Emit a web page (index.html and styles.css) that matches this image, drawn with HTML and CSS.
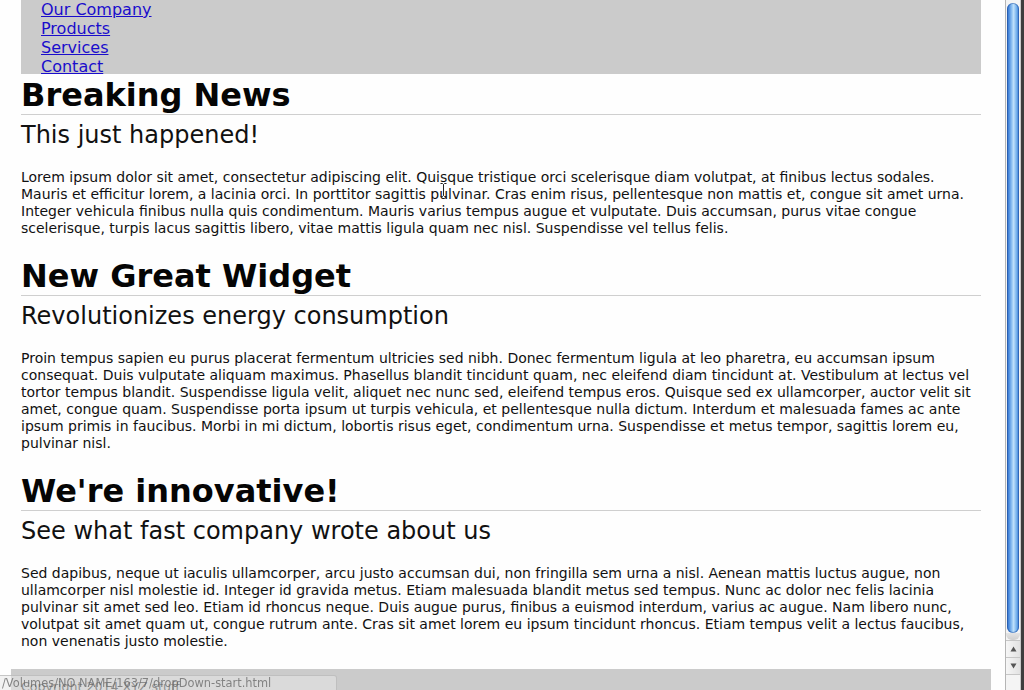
FILE: index.html
```html
<!DOCTYPE html>
<html lang="en">
<head>
<meta charset="utf-8">
<title>dropDown-start</title>
<link rel="stylesheet" href="styles.css">
</head>
<body>
<div class="page">
  <header class="site-header">
    <ul class="nav">
      <li><a href="#">Our Company</a></li>
      <li><a href="#">Products</a></li>
      <li><a href="#">Services</a></li>
      <li><a href="#">Contact</a></li>
    </ul>
  </header>

  <section class="story">
    <h1>Breaking News</h1>
    <h2>This just happened!</h2>
    <p>Lorem ipsum dolor sit amet, consectetur adipiscing elit. Quisque tristique orci scelerisque diam volutpat, at finibus lectus sodales. Mauris et efficitur lorem, a lacinia orci. In porttitor sagittis pulvinar. Cras enim risus, pellentesque non mattis et, congue sit amet urna. Integer vehicula finibus nulla quis condimentum. Mauris varius tempus augue et vulputate. Duis accumsan, purus vitae congue scelerisque, turpis lacus sagittis libero, vitae mattis ligula quam nec nisl. Suspendisse vel tellus felis.</p>
  </section>

  <section class="story">
    <h1>New Great Widget</h1>
    <h2>Revolutionizes energy consumption</h2>
    <p>Proin tempus sapien eu purus placerat fermentum ultricies sed nibh. Donec fermentum ligula at leo pharetra, eu accumsan ipsum consequat. Duis vulputate aliquam maximus. Phasellus blandit tincidunt quam, nec eleifend diam tincidunt at. Vestibulum at lectus vel tortor tempus blandit. Suspendisse ligula velit, aliquet nec nunc sed, eleifend tempus eros. Quisque sed ex ullamcorper, auctor velit sit amet, congue quam. Suspendisse porta ipsum ut turpis vehicula, et pellentesque nulla dictum. Interdum et malesuada fames ac ante ipsum primis in faucibus. Morbi in mi dictum, lobortis risus eget, condimentum urna. Suspendisse et metus tempor, sagittis lorem eu, pulvinar nisl.</p>
  </section>

  <section class="story last">
    <h1>We're innovative!</h1>
    <h2>See what fast company wrote about us</h2>
    <p>Sed dapibus, neque ut iaculis ullamcorper, arcu justo accumsan dui, non fringilla sem urna a nisl. Aenean mattis luctus augue, non ullamcorper nisl molestie id. Integer id gravida metus. Etiam malesuada blandit metus sed tempus. Nunc ac dolor nec felis lacinia pulvinar sit amet sed leo. Etiam id rhoncus neque. Duis augue purus, finibus a euismod interdum, varius ac augue. Nam libero nunc, volutpat sit amet quam ut, congue rutrum ante. Cras sit amet lorem eu ipsum tincidunt rhoncus. Etiam tempus velit a lectus faucibus, non venenatis justo molestie.</p>
  </section>

  <footer class="site-footer">Copyright 2014 XYZ stuff</footer>
</div>

<svg class="cursor" width="7" height="14" viewBox="0 0 7 14" aria-hidden="true">
  <path d="M0.5 0.5h2l1 1 1-1h2M3.5 1.5v11M0.5 13.5h2l1-1 1 1h2" fill="none" stroke="#222" stroke-width="1"/>
</svg>

<div class="scrollbar" aria-hidden="true">
  <div class="track">
    <div class="thumb"></div>
    <div class="nub"></div>
    <div class="arrow up"><svg width="7" height="6" viewBox="0 0 7 6"><path d="M3.5 0.5L6.5 5.5H0.5Z" fill="#555"/></svg></div>
    <div class="arrow down"><svg width="7" height="6" viewBox="0 0 7 6"><path d="M0.5 0.5H6.5L3.5 5.5Z" fill="#555"/></svg></div>
  </div>
  <div class="edge"></div>
</div>

<div class="statusbar">/Volumes/NO NAME/163/7/dropDown-start.html</div>
</body>
</html>
```

FILE: styles.css
```css
html, body {
  margin: 0;
  padding: 0;
  background: #fefefe;
  height: 690px;
  overflow: hidden;
}

body {
  font-family: "DejaVu Sans", Verdana, sans-serif;
  color: #000;
}

.page {
  width: 960px;
  margin-left: 21px;
}

.site-header {
  background: #cbcbcb;
  height: 74px;
}

.nav {
  list-style: none;
  margin: 0;
  padding: 0 0 0 20px;
  font-size: 16px;
  line-height: 19px;
}

.nav a {
  color: #1a0dcc;
  text-decoration: underline;
}

.story h1 {
  font-size: 32px;
  font-weight: bold;
  line-height: 37px;
  margin: 3px 0 0;
  border-bottom: 1px solid #cfcfcf;
  color: #050505;
}

.story h2 {
  font-size: 24px;
  font-weight: normal;
  line-height: 28px;
  margin: 6px 0 20px;
  color: #111;
}

.story p {
  font-size: 14px;
  line-height: 17px;
  margin: 0 0 21px;
  color: #111;
}

.story.last p {
  margin-bottom: 19px;
}

.site-footer {
  margin-left: -10px;
  width: 960px;
  padding: 10px 10px 10px;
  background: #cbcbcb;
  font-size: 12.6px;
  line-height: 15px;
  color: #222;
}

.cursor {
  position: absolute;
  left: 440px;
  top: 183px;
}

.scrollbar {
  position: fixed;
  top: 0;
  right: 0;
  width: 19px;
  height: 690px;
  display: flex;
}

.scrollbar .track {
  width: 16px;
  background: #f4f4f4;
  border-left: 1px solid #b5b5b5;
  border-right: 1px solid #c8c8c8;
  display: flex;
  flex-direction: column;
  align-items: center;
  box-sizing: border-box;
  padding-top: 3px;
}

.scrollbar .thumb {
  width: 12px;
  height: 630px;
  border-radius: 6px;
  background: linear-gradient(to right, #2a66c0 0%, #4f8fe0 18%, #9fcdf5 45%, #bfe0fb 55%, #73b0ec 80%, #3474cf 100%);
  box-shadow: inset 0 0 0 1px rgba(30, 80, 160, 0.5);
}

.scrollbar .nub {
  width: 14px;
  height: 7px;
  background: linear-gradient(to bottom, #e4e4e4, #cfcfcf);
  border-radius: 0 0 6px 6px;
}

.scrollbar .arrow {
  width: 14px;
  height: 16px;
  border-top: 1px solid #c6c6c6;
  background: linear-gradient(to right, #f6f6f6, #e2e2e2);
  display: flex;
  align-items: center;
  justify-content: center;
}

.scrollbar .arrow.down {
  border-bottom: 1px solid #c6c6c6;
}

.scrollbar .edge {
  width: 3px;
  background: #3d3d3d;
}

.statusbar {
  position: fixed;
  left: 0;
  bottom: 0;
  width: 334px;
  height: 14px;
  padding-left: 2px;
  background: rgba(232, 232, 232, 0.55);
  border-top: 1px solid rgba(180, 180, 180, 0.7);
  border-right: 1px solid rgba(180, 180, 180, 0.7);
  border-top-right-radius: 3px;
  font-family: "DejaVu Sans", Verdana, sans-serif;
  font-size: 11.4px;
  line-height: 14px;
  color: rgba(100, 100, 100, 0.75);
  white-space: nowrap;
}
```
